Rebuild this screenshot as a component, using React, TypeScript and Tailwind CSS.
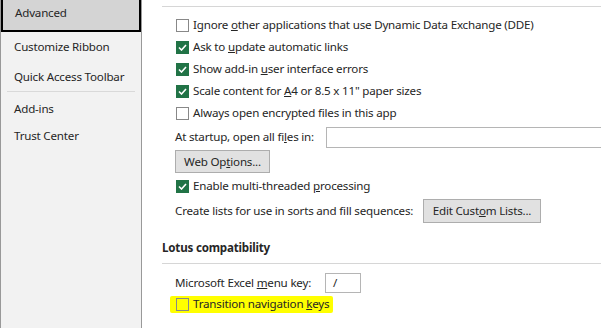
import React from "react";

const font = { fontFamily: '"Noto Sans", "Open Sans", sans-serif' };

const Check: React.FC<{ checked?: boolean }> = ({ checked }) =>
  checked ? (
    <span className="w-[13px] h-[13px] bg-[#217346] flex items-center justify-center flex-shrink-0">
      <svg width="9" height="7" viewBox="0 0 9 7">
        <path d="M1 3.5 L3.5 6 L8 1" stroke="white" strokeWidth="1.6" fill="none" />
      </svg>
    </span>
  ) : (
    <span className="w-[13px] h-[13px] border border-[#888888] bg-white flex-shrink-0" />
  );

const CheckRow: React.FC<{ checked?: boolean; children: React.ReactNode; className?: string }> = ({
  checked,
  children,
  className = "",
}) => (
  <div className={`h-[22px] flex items-center pl-[34px] gap-[4px] whitespace-nowrap ${className}`}>
    <Check checked={checked} />
    <span>{children}</span>
  </div>
);

const sideItems = ["Customize Ribbon", "Quick Access Toolbar"];

export default function App() {
  return (
    <div
      className="w-[601px] h-[328px] flex bg-white text-[11.6px] tracking-[-0.2px] text-[#262626] overflow-hidden"
      style={font}
    >
      {/* sidebar */}
      <div className="w-[142px] h-full flex-shrink-0 bg-[#f2f2f2] border-l border-r border-[#999999] flex flex-col">
        <div className="h-[32px] bg-[#d4d4d4] border-2 border-t-0 border-black flex items-center pl-[12px] pb-[4px]">
          Advanced
        </div>
        {sideItems.map((s) => (
          <div key={s} className="h-[30px] flex items-center pl-[13px]">
            {s}
          </div>
        ))}
        <div className="h-px bg-[#d9d9d9] mx-[6px] mt-[-1px]" />
        <div className="h-[27px] flex items-center pl-[13px] mt-[3px]">Add-ins</div>
        <div className="h-[27px] flex items-center pl-[13px]">Trust Center</div>
      </div>

      {/* content */}
      <div className="flex-1 min-w-0 pt-[6px]">
        <div className="h-px bg-[#d6d6d6] ml-[20px]" />
        <div className="mt-[7px]">
          <CheckRow>
            Ignore <u>o</u>ther applications that use Dynamic Data Exchange (DDE)
          </CheckRow>
          <CheckRow checked>
            Ask to <u>u</u>pdate automatic links
          </CheckRow>
          <CheckRow checked>
            Show add-in <u>u</u>ser interface errors
          </CheckRow>
          <CheckRow checked>
            Scale content for <u>A</u>4 or 8.5 x 11" paper sizes
          </CheckRow>
          <CheckRow>Always open encrypted files in this app</CheckRow>
        </div>

        <div className="h-[22px] mt-[2px] flex items-center pl-[33px] whitespace-nowrap">
          <span className="w-[151px] flex-shrink-0">
            At startup, open all fi<u>l</u>es in:
          </span>
          <div className="h-[21px] flex-1 border border-[#b5b5b5] border-r-0 bg-white" />
        </div>

        <div className="mt-[2px] pl-[33px]">
          <button className="h-[23px] w-[95px] bg-[#e1e1e1] border border-[#adadad] text-[11.6px] text-[#262626]">
            Web Op<u>t</u>ions...
          </button>
        </div>

        <CheckRow checked className="mt-[2px]">
          Enable multi-threaded <u>p</u>rocessing
        </CheckRow>

        <div className="h-[24px] mt-[2px] flex items-center pl-[33px] whitespace-nowrap">
          <span className="w-[248px] flex-shrink-0">Create lists for use in sorts and fill sequences:</span>
          <button className="h-[24px] w-[118px] flex-shrink-0 bg-[#e1e1e1] border border-[#adadad] text-[11.6px] text-[#262626]">
            Edit Cust<u>o</u>m Lists...
          </button>
        </div>

        <div className="h-[20px] mt-[15px] flex items-center pl-[20px] font-bold">Lotus compatibility</div>
        <div className="h-px bg-[#d6d6d6] ml-[20px] mt-[5px]" />

        <div className="h-[20px] mt-[9px] flex items-center pl-[33px] whitespace-nowrap">
          <span className="w-[150px] flex-shrink-0">
            Microsoft Excel <u>m</u>enu key:
          </span>
          <div className="h-[20px] w-[36px] border border-[#b5b5b5] bg-white flex items-center pl-[7px]">/</div>
        </div>

        <div className="h-[18px] mt-[2px] flex items-center pl-[28px] whitespace-nowrap">
          <span className="h-[17px] bg-[#ffff00] flex items-center gap-[4px] pl-[6px] pr-[4px] rounded-[2px]">
            <span className="w-[13px] h-[13px] border border-[#888888] flex-shrink-0" />
            <span>
              Transition navigation <u>k</u>eys
            </span>
          </span>
        </div>
      </div>
    </div>
  );
}
